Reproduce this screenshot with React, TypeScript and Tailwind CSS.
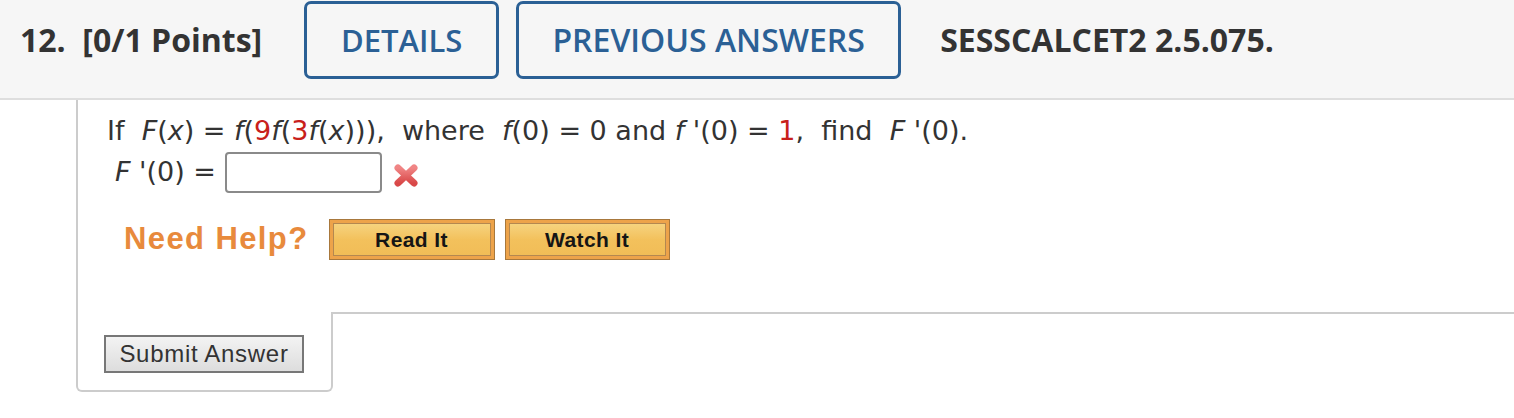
import React from "react";

const R = ({ children }: { children: React.ReactNode }) => (
  <span className="text-[#c8201b]">{children}</span>
);
const I = ({ children }: { children: React.ReactNode }) => <i>{children}</i>;

function RedX() {
  return (
    <svg width="26" height="25" viewBox="0 0 26 25" className="ml-[11px] mt-[11px] shrink-0">
      <defs>
        <linearGradient id="rx" x1="0" y1="0" x2="0" y2="1">
          <stop offset="0" stopColor="#f08585" />
          <stop offset="1" stopColor="#d94848" />
        </linearGradient>
      </defs>
      <path d="M5 5 L21 20 M21 5 L5 20" stroke="url(#rx)" strokeWidth="7" strokeLinecap="round" />
    </svg>
  );
}

function HelpButton({ label, w }: { label: string; w: string }) {
  return (
    <div className={`${w} h-[41px] border border-[#a8783c] bg-[#eda34a] p-[3px]`}>
      <div
        className="h-full w-full border border-[#b48850] bg-gradient-to-b from-[#f6d37e] via-[#f3c15c] to-[#f1bd57] flex items-center justify-center text-[21px] font-bold tracking-[0.4px] text-[#151515]"
        style={{ fontFamily: "'Liberation Sans', Arial, sans-serif" }}
      >
        {label}
      </div>
    </div>
  );
}

export default function App() {
  return (
    <div className="w-[1514px] h-[418px] bg-white overflow-hidden">
      <div
        className="h-[100px] bg-[#f6f6f6] border-b-2 border-[#dedede] flex items-start pt-[1px] pl-[20px] text-[#333]"
        style={{ fontFamily: "'Open Sans', sans-serif" }}
      >
        <div className="h-[78px] flex items-center text-[32px] font-bold whitespace-pre">12.  [0/1 Points]</div>
        <div className="ml-[42px] w-[195px] h-[78px] border-[3px] border-[#2b6095] rounded-[7px] flex items-center justify-center text-[#2b6095] text-[31px] font-semibold">
          DETAILS
        </div>
        <div className="ml-[17px] w-[385px] h-[78px] border-[3px] border-[#2b6095] rounded-[7px] flex items-center justify-center text-[#2b6095] text-[32px] font-semibold">
          PREVIOUS ANSWERS
        </div>
        <div className="ml-[39px] h-[78px] flex items-center text-[32px] font-bold">SESSCALCET2 2.5.075.</div>
      </div>

      <div className="ml-[76px]">
        <div
          className="border-l-2 border-[#cccccc] h-[212px] pl-[29px] pt-[15px] text-[#333]"
          style={{ fontFamily: "'DejaVu Sans', Verdana, sans-serif" }}
        >
          <div className="text-[27px] leading-[32px] whitespace-pre">
            If  <I>F</I>(<I>x</I>) = <I>f</I>(<R>9</R><I>f</I>(<R>3</R><I>f</I>(<I>x</I>))),  where  <I>f</I>(0) = 0 and <I>f</I> '(0) = <R>1</R>,  find  <I>F</I> '(0).
          </div>
          <div className="flex items-start mt-[5px]">
            <div className="text-[27px] leading-[32px] whitespace-pre pl-[8px] pt-[4px]"><I>F</I> '(0) = </div>
            <div className="w-[157px] h-[41px] border-2 border-[#8a8a8a] rounded-[4px] bg-white" />
            <RedX />
          </div>
          <div className="flex items-center mt-[23px] pl-[17px]">
            <div
              className="text-[31px] font-bold tracking-[1.4px] text-[#e88a3c] mr-[20px]"
              style={{ fontFamily: "'Liberation Sans', Arial, sans-serif" }}
            >
              Need Help?
            </div>
            <HelpButton label="Read It" w="w-[166px]" />
            <div className="w-[10px]" />
            <HelpButton label="Watch It" w="w-[165px]" />
          </div>
        </div>
        <div className="flex">
          <div className="w-[257px] h-[80px] border-l-2 border-r-2 border-b-2 border-[#cccccc] rounded-bl-[6px] rounded-br-[6px] pl-[26px] pt-[23px]">
            <div
              className="w-[200px] h-[38px] border-2 border-[#777] bg-gradient-to-b from-[#f3f3f3] to-[#dddddd] flex items-center justify-center text-[24px] tracking-[0.7px] text-[#333]"
              style={{ fontFamily: "'Liberation Sans', Arial, sans-serif" }}
            >
              Submit Answer
            </div>
          </div>
          <div className="flex-1 border-t-2 border-[#cccccc] -ml-[2px]" />
        </div>
      </div>
    </div>
  );
}
